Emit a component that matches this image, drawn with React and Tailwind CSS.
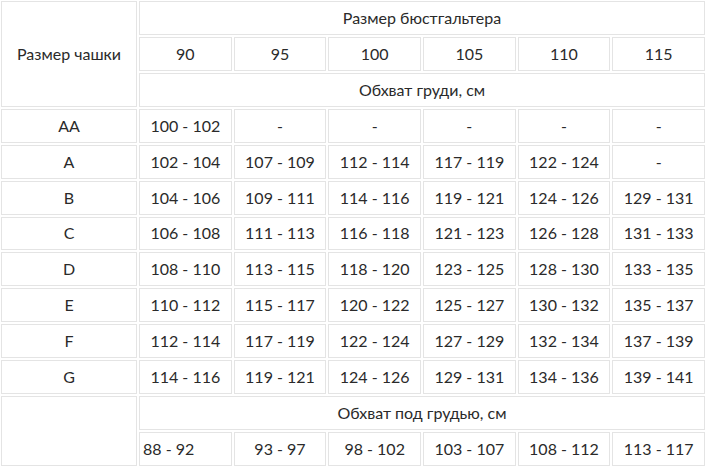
import React from "react";

const sizes = ["90", "95", "100", "105", "110", "115"];
const rows = [
  ["AA", "100 - 102", "-", "-", "-", "-", "-"],
  ["A", "102 - 104", "107 - 109", "112 - 114", "117 - 119", "122 - 124", "-"],
  ["B", "104 - 106", "109 - 111", "114 - 116", "119 - 121", "124 - 126", "129 - 131"],
  ["C", "106 - 108", "111 - 113", "116 - 118", "121 - 123", "126 - 128", "131 - 133"],
  ["D", "108 - 110", "113 - 115", "118 - 120", "123 - 125", "128 - 130", "133 - 135"],
  ["E", "110 - 112", "115 - 117", "120 - 122", "125 - 127", "130 - 132", "135 - 137"],
  ["F", "112 - 114", "117 - 119", "122 - 124", "127 - 129", "132 - 134", "137 - 139"],
  ["G", "114 - 116", "119 - 121", "124 - 126", "129 - 131", "134 - 136", "139 - 141"],
];
const under = ["88 - 92", "93 - 97", "98 - 102", "103 - 107", "108 - 112", "113 - 117"];

const cell = "border border-[#e4e4e4] flex items-center justify-center";

const App = () => {
  return (
    <div
      className="w-[706px] h-[467px] bg-white p-px grid grid-cols-[136px_repeat(6,1fr)] grid-rows-[repeat(13,1fr)] gap-[2px] text-[16px] text-[#2a2a2a]"
      style={{ fontFamily: "Lato, 'Noto Sans', sans-serif" }}
    >
      <div className={`${cell} row-span-3`}>Размер чашки</div>
      <div className={`${cell} col-span-6`}>Размер бюстгальтера</div>
      {sizes.map((s) => (
        <div key={s} className={cell}>
          {s}
        </div>
      ))}
      <div className={`${cell} col-span-6`}>Обхват груди, см</div>

      {rows.map((r) =>
        r.map((v, i) => (
          <div key={r[0] + i} className={cell}>
            {v}
          </div>
        ))
      )}

      <div className={`${cell} row-span-2`}></div>
      <div className={`${cell} col-span-6`}>Обхват под грудью, см</div>
      {under.map((v, i) => (
        <div
          key={v}
          className={`border border-[#e4e4e4] flex items-center ${
            i === 0 ? "justify-start pl-[3px]" : "justify-center"
          }`}
        >
          {v}
        </div>
      ))}
    </div>
  );
};

export default App;
